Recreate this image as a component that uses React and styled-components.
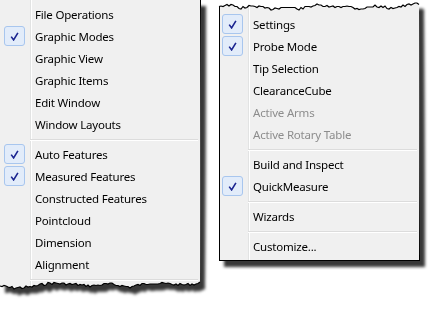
import React from 'react'
import styled, { createGlobalStyle } from 'styled-components'

const GlobalStyle = createGlobalStyle`
  html, body {
    margin: 0;
    padding: 0;
    background: #fff;
  }
  body {
    font-family: "Noto Sans", "Liberation Sans", sans-serif;
  }
`

// pseudo random, so the torn edge is the same on every render
const makeRand = (seed) => {
  let s = seed
  return () => {
    s = (s * 9301 + 49297) % 233280
    return s / 233280
  }
}

const tear = (ctrl, seed, amp) => {
  const rnd = makeRand(seed)
  const pts = []
  for (let x = 0; x <= 201; x += 2) {
    let i = 0
    while (i < ctrl.length - 2 && ctrl[i + 1][0] < x) i++
    const [x0, y0] = ctrl[i]
    const [x1, y1] = ctrl[i + 1]
    const t = Math.min(1, Math.max(0, (x - x0) / (x1 - x0)))
    const y = y0 + (y1 - y0) * t + (rnd() - 0.5) * amp
    pts.push([x, Math.round(y * 2) / 2])
  }
  return pts
}

const bottomEdge = tear(
  [[0, 286], [15, 288], [30, 287], [50, 283], [70, 284], [90, 286], [110, 284],
   [130, 287], [150, 283], [170, 284], [185, 285], [201, 283]],
  7, 2.6
)

const topEdge = tear(
  [[0, 4], [11, 3], [21, 6], [36, 4], [51, 7], [66, 5], [81, 7], [96, 3], [111, 5],
   [126, 4], [141, 7], [156, 4], [171, 6], [186, 4], [194, 2], [201, 1]],
  13, 2.4
)

const bottomClip = `polygon(0 0, 201px 0, ${[...bottomEdge].reverse().map(([x, y]) => `${x}px ${y}px`).join(', ')})`
const topClip = `polygon(${topEdge.map(([x, y]) => `${x}px ${y}px`).join(', ')}, 201px 100%, 0 100%)`

const Page = styled.div`
  display: flex;
  align-items: flex-start;
  gap: 18px;
  width: 438px;
  height: 310px;
  overflow: hidden;
`

const Shadowed = styled.div`
  position: relative;
  flex: none;
  margin-top: ${(p) => p.$top || 0}px;
  filter: drop-shadow(5px 6px 1.6px rgba(0, 0, 0, 0.78));
`

const Panel = styled.div`
  box-sizing: border-box;
  width: 201px;
  height: ${(p) => p.$height}px;
  padding: ${(p) => p.$padTop}px 2px 2px ${(p) => p.$padLeft}px;
  overflow: hidden;
  border-right: 1px solid #000;
  border-left: ${(p) => (p.$open ? 'none' : '1px solid #000')};
  border-bottom: ${(p) => (p.$open ? 'none' : '1px solid #000')};
  background:
    linear-gradient(to right,
      transparent ${(p) => p.$padLeft + 26}px,
      #e2e3e3 ${(p) => p.$padLeft + 26}px,
      #e2e3e3 ${(p) => p.$padLeft + 27}px,
      #fff ${(p) => p.$padLeft + 27}px,
      #fff ${(p) => p.$padLeft + 28}px,
      transparent ${(p) => p.$padLeft + 28}px),
    #f0f0f0;
  clip-path: ${(p) => p.$clip};
`

const Edge = styled.svg`
  position: absolute;
  left: 0;
  top: 0;
  width: 201px;
  height: ${(p) => p.$height}px;
  overflow: visible;
  pointer-events: none;
`

const Item = styled.div`
  display: flex;
  align-items: center;
  height: 22px;
  font-size: 11.5px;
  letter-spacing: -0.2px;
  white-space: nowrap;
  color: ${(p) => (p.$disabled ? '#8d8d8d' : '#000')};
`

const CheckCell = styled.div`
  flex: none;
  width: 31px;
  display: flex;
  align-items: center;
`

const CheckBox = styled.span`
  box-sizing: border-box;
  width: 21px;
  height: 20px;
  border: 1px solid #a8c6ee;
  border-radius: 3px;
  background: #e2ecfa;
  display: flex;
  align-items: center;
  justify-content: center;
`

const Separator = styled.div`
  height: 8px;
  margin-left: 26px;
  background:
    linear-gradient(#dcdcdc, #dcdcdc) 0 4px / 100% 1px no-repeat,
    linear-gradient(#fff, #fff) 0 5px / 100% 1px no-repeat;
`

const Check = () => (
  <svg width="9" height="9" viewBox="0 0 9 9">
    <path d="M1.2 4.6 L3.6 7.9 L7.9 0.8" fill="none" stroke="#1a2490" strokeWidth="1.6" />
  </svg>
)

const MenuItem = ({ label, checked, disabled }) => (
  <Item $disabled={disabled}>
    <CheckCell>
      {checked && (
        <CheckBox>
          <Check />
        </CheckBox>
      )}
    </CheckCell>
    {label}
  </Item>
)

const leftGroups = [
  [
    { label: 'File Operations' },
    { label: 'Graphic Modes', checked: true },
    { label: 'Graphic View' },
    { label: 'Graphic Items' },
    { label: 'Edit Window' },
    { label: 'Window Layouts' },
  ],
  [
    { label: 'Auto Features', checked: true },
    { label: 'Measured Features', checked: true },
    { label: 'Constructed Features' },
    { label: 'Pointcloud' },
    { label: 'Dimension' },
    { label: 'Alignment' },
  ],
  [],
]

const rightGroups = [
  [
    { label: 'Settings', checked: true },
    { label: 'Probe Mode', checked: true },
    { label: 'Tip Selection' },
    { label: 'ClearanceCube' },
    { label: 'Active Arms', disabled: true },
    { label: 'Active Rotary Table', disabled: true },
  ],
  [
    { label: 'Build and Inspect' },
    { label: 'QuickMeasure', checked: true },
  ],
  [{ label: 'Wizards' }],
  [{ label: 'Customize...' }],
]

const renderGroups = (groups) =>
  groups.map((g, gi) => (
    <React.Fragment key={gi}>
      {gi > 0 && <Separator />}
      {g.map((it) => (
        <MenuItem key={it.label} {...it} />
      ))}
    </React.Fragment>
  ))

const points = (pts) => pts.map(([x, y]) => `${x},${y}`).join(' ')

export default function App() {
  return (
    <>
      <GlobalStyle />
      <Page>
        <Shadowed>
          <Panel $open $height={292} $padTop={3} $padLeft={4} $clip={bottomClip}>
            {renderGroups(leftGroups)}
          </Panel>
          <Edge $height={292}>
            <polyline points={points(bottomEdge)} fill="none" stroke="#000" strokeWidth="1.2" />
          </Edge>
        </Shadowed>
        <Shadowed $top={2}>
          <Panel $height={259} $padTop={11} $padLeft={2} $clip={topClip}>
            {renderGroups(rightGroups)}
          </Panel>
          <Edge $height={259}>
            <polyline points={points(topEdge)} fill="none" stroke="#000" strokeWidth="1.2" />
          </Edge>
        </Shadowed>
      </Page>
    </>
  )
}
